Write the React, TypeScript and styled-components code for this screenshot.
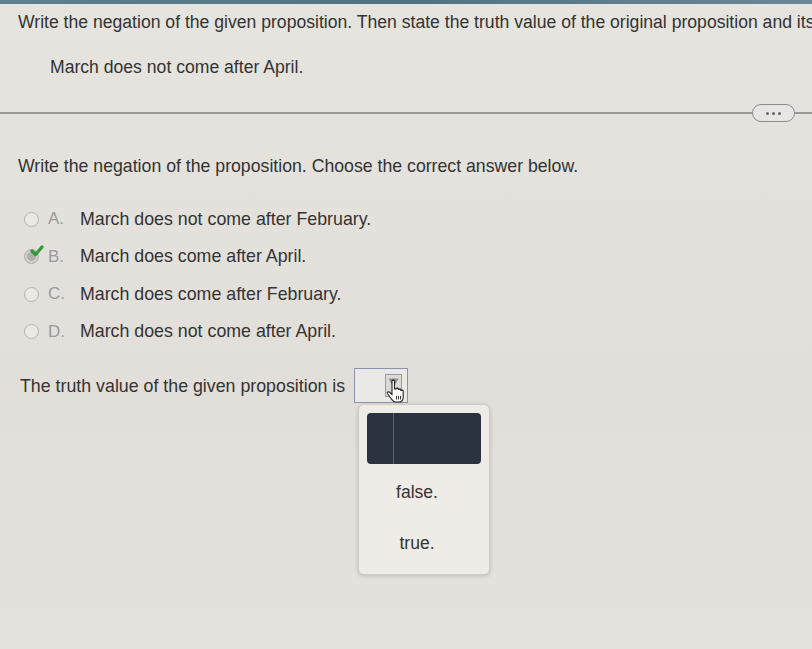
import React from "react";
import styled, { createGlobalStyle } from "styled-components";

const Global = createGlobalStyle`
  html, body { margin: 0; padding: 0; background: #e3e0db; overflow: hidden; }
  body { font-family: "Liberation Sans", Arial, sans-serif; color: #333; }
`;

const Page = styled.div`
  width: 812px;
  height: 649px;
  position: relative;
  overflow: hidden;
  background: linear-gradient(180deg, #e6e4df 0%, #e2dfda 60%, #e5e2dd 100%);
`;

const TopBand = styled.div`
  height: 4px;
  background: linear-gradient(90deg, #5e7f8e, #4f7284 50%, #6a8896);
`;

const Header = styled.div`
  padding: 8px 0 0 18px;
  white-space: nowrap;
  overflow: hidden;
`;

const Title = styled.div`
  font-size: 17.6px;
  line-height: 20px;
  color: #333;
`;

const Statement = styled.div`
  margin: 25px 0 0 32px;
  font-size: 17.6px;
  line-height: 20px;
  color: #333;
`;

const DividerRow = styled.div`
  display: flex;
  align-items: center;
  margin-top: 27px;
  height: 18px;
`;

const Line = styled.div<{ $grow?: boolean }>`
  flex: ${(p) => (p.$grow ? 1 : "0 0 17px")};
  height: 2px;
  background: #9a9995;
`;

const Pill = styled.div`
  width: 41px;
  height: 16px;
  border: 1.5px solid #8b8a87;
  border-radius: 9px;
  display: flex;
  align-items: center;
  justify-content: center;
  gap: 3px;
  background: #e8e6e2;
`;

const Dot = styled.span`
  width: 3px;
  height: 3px;
  background: #666;
  border-radius: 50%;
`;

const Question = styled.div`
  margin: 34px 0 0 18px;
  font-size: 17.7px;
  line-height: 20px;
  color: #333;
`;

const Options = styled.div`
  margin: 33px 0 0 24px;
  display: flex;
  flex-direction: column;
  gap: 17.6px;
`;

const Option = styled.div`
  display: flex;
  align-items: center;
  height: 20px;
  position: relative;
`;

const Radio = styled.span<{ $filled?: boolean }>`
  width: 15px;
  height: 15px;
  border-radius: 50%;
  border: 1.5px solid #b3b2af;
  background: ${(p) => (p.$filled ? "#b0afac" : "#ebe9e5")};
  box-shadow: ${(p) => (p.$filled ? "inset 0 0 0 2px #d6d4d0" : "none")};
  box-sizing: border-box;
  margin-right: 9px;
  flex: none;
`;

const Letter = styled.span`
  width: 32px;
  font-size: 17px;
  color: #9a9a98;
`;

const OptText = styled.span`
  font-size: 17.8px;
  color: #333;
`;

const Check = styled.svg`
  position: absolute;
  left: 6px;
  top: -2px;
`;

const TruthRow = styled.div`
  margin: 26px 0 0 20px;
  display: flex;
  align-items: center;
  position: relative;
`;

const TruthText = styled.span`
  font-size: 17.8px;
  color: #333;
  margin-right: 9px;
  position: relative;
  top: 1px;
`;

const Box = styled.div`
  width: 54px;
  height: 35px;
  border: 1.5px solid #8c91ad;
  background: #ebe9e5;
  position: relative;
  box-sizing: border-box;
`;

const ArrowBtn = styled.div`
  position: absolute;
  right: 5px;
  top: 5px;
  width: 17px;
  height: 23px;
  border: 1px solid #9b9aa0;
  background: #dcdad6;
  display: flex;
  align-items: flex-start;
  justify-content: center;
  padding-top: 3px;
  box-sizing: border-box;
`;

const Popup = styled.div`
  position: absolute;
  left: 358px;
  top: 404px;
  width: 132px;
  height: 171px;
  background: #efece8;
  border: 1px solid #cfccc7;
  border-radius: 6px;
  box-shadow: 0 1px 4px rgba(0, 0, 0, 0.18);
  box-sizing: border-box;
  display: flex;
  flex-direction: column;
  align-items: center;
  padding-top: 8px;
`;

const DarkBar = styled.div`
  width: 114px;
  height: 51px;
  background: #2a3240;
  border-radius: 4px;
  display: flex;
`;

const BarSplit = styled.div`
  width: 26px;
  border-right: 1px solid #5a6270;
`;

const Item = styled.div<{ $mt: number }>`
  margin-top: ${(p) => p.$mt}px;
  margin-right: 14px;
  font-size: 17.5px;
  color: #333;
  line-height: 20px;
`;

const Cursor = styled.svg`
  position: absolute;
  left: 386px;
  top: 379px;
`;

const options = [
  { l: "A.", t: "March does not come after February." },
  { l: "B.", t: "March does come after April.", sel: true },
  { l: "C.", t: "March does come after February." },
  { l: "D.", t: "March does not come after April." },
];

export default function App() {
  return (
    <Page>
      <Global />
      <TopBand />
      <Header>
        <Title>
          Write the negation of the given proposition. Then state the truth value of the original proposition and its
        </Title>
        <Statement>March does not come after April.</Statement>
      </Header>
      <DividerRow>
        <Line $grow />
        <Pill>
          <Dot />
          <Dot />
          <Dot />
        </Pill>
        <Line />
      </DividerRow>
      <Question>Write the negation of the proposition. Choose the correct answer below.</Question>
      <Options>
        {options.map((o) => (
          <Option key={o.l}>
            <Radio $filled={o.sel} />
            <Letter>{o.l}</Letter>
            <OptText>{o.t}</OptText>
            {o.sel && (
              <Check width="14" height="12" viewBox="0 0 14 12">
                <path d="M2 6 L5.5 9.5 L12 2" stroke="#2f9a3a" strokeWidth="3.2" fill="none" strokeLinecap="round" strokeLinejoin="round" />
              </Check>
            )}
          </Option>
        ))}
      </Options>
      <TruthRow>
        <TruthText>The truth value of the given proposition is</TruthText>
        <Box>
          <ArrowBtn>
            <svg width="11" height="10" viewBox="0 0 11 10">
              <path d="M0.5 0.5 L10.5 0.5 L5.5 9.5 Z" fill="#8e8d92" />
            </svg>
          </ArrowBtn>
        </Box>
      </TruthRow>
      <Popup>
        <DarkBar>
          <BarSplit />
        </DarkBar>
        <Item $mt={18}>false.</Item>
        <Item $mt={31}>true.</Item>
      </Popup>
      <Cursor width="22" height="26" viewBox="0 0 22 26">
        <path
          d="M6 2 C6 0.8 8.5 0.8 8.5 2 L8.5 10 L10 10 C10 8.8 12.4 8.8 12.4 10 L12.4 11 C12.4 9.8 14.8 9.8 14.8 11 L14.8 12 C14.8 10.8 17.2 10.8 17.2 12 L17.2 18 C17.2 21 15.5 23 13 23 L9.5 23 C7.5 23 6.5 21.5 5 19.5 L1.5 14.5 C0.8 13.4 2.2 12.2 3.3 13 L6 15.5 Z"
          fill="#fff"
          stroke="#222"
          strokeWidth="1.1"
        />
        <path d="M10.5 17 V20.5 M12.5 17 V20.5 M14.5 17 V20.5" stroke="#222" strokeWidth="0.9" />
      </Cursor>
    </Page>
  );
}
